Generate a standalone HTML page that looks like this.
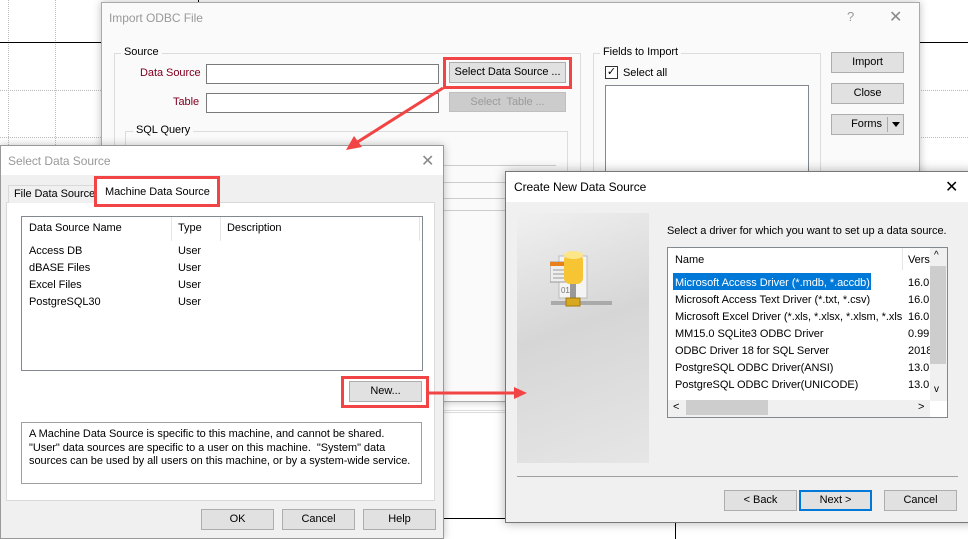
<!DOCTYPE html>
<html><head><meta charset="utf-8"><style>
*{box-sizing:border-box;margin:0;padding:0}
body{width:968px;height:539px;overflow:hidden;background:#fff;font-family:"Liberation Sans",sans-serif;font-size:11px;letter-spacing:-0.05px;color:#000;position:relative}
.a{position:absolute}
.btn{position:absolute;background:#e1e1e1;border:1px solid #adadad;text-align:center;line-height:18px;font-size:11px}
.inp{position:absolute;background:#fff;border:1px solid #7a7a7a}
.gb{position:absolute;border:1px solid #dcdcdc}
.gl{position:absolute;background:#fafafa;padding:0 3px}
.t{position:absolute;white-space:nowrap}
.red{position:absolute;border:3px solid #f24444}
</style></head><body>
<!-- background grid -->
<div class="a" style="left:8px;top:0;height:145px;border-left:1px dotted #bbb"></div>
<div class="a" style="left:55px;top:0;height:145px;border-left:1px dotted #bbb"></div>
<div class="a" style="left:0;top:42px;width:101px;border-top:1px solid #000"></div>
<div class="a" style="left:0;top:90px;width:101px;border-top:1px dotted #bbb"></div>
<div class="a" style="left:0;top:137px;width:101px;border-top:1px dotted #bbb"></div>
<div class="a" style="left:919px;top:42px;width:49px;border-top:1px solid #000"></div>
<div class="a" style="left:919px;top:90px;width:49px;border-top:1px dotted #bbb"></div>
<div class="a" style="left:919px;top:137px;width:49px;border-top:1px dotted #bbb"></div>
<div class="a" style="left:198px;top:0;height:3px;border-left:1px solid #000"></div>
<div class="a" style="left:675px;top:522px;height:17px;border-left:1px solid #000"></div>
<div class="a" style="left:443px;top:518px;width:62px;border-top:1px solid #000"></div>

<!-- Import ODBC dialog -->
<div class="a" style="left:101px;top:2px;width:819px;height:400px;background:#fafafa;border:1px solid #aaa;box-shadow:0 0 8px rgba(0,0,0,.25)"></div>
<div class="t" style="left:109px;top:11px;color:#999;font-size:12px">Import ODBC File</div>
<div class="t" style="left:847px;top:9px;color:#999;font-size:13px">?</div>
<div class="t" style="left:889px;top:7px;color:#888;font-size:16px">✕</div>
<div class="gb" style="left:114px;top:53px;width:467px;height:360px"></div>
<div class="gl" style="left:121px;top:46px">Source</div>
<div class="t" style="left:140px;top:67px;color:#800020">Data Source</div>
<div class="inp" style="left:206px;top:64px;width:233px;height:20px"></div>
<div class="btn" style="left:449px;top:62px;width:117px;height:21px">Select Data Source ...</div>
<div class="red" style="left:443px;top:57px;width:129px;height:32px"></div>
<div class="t" style="left:173px;top:96px;color:#800020">Table</div>
<div class="inp" style="left:206px;top:93px;width:233px;height:20px"></div>
<div class="btn" style="left:449px;top:92px;width:117px;height:20px;background:#ccc;border-color:#bfbfbf;color:#9a9a9a">Select&nbsp; Table ...</div>
<div class="gb" style="left:125px;top:131px;width:443px;height:280px"></div>
<div class="gl" style="left:133px;top:124px">SQL Query</div>
<div class="gb" style="left:593px;top:53px;width:228px;height:360px"></div>
<div class="gl" style="left:600px;top:46px">Fields to Import</div>
<div class="a" style="left:605px;top:66px;width:13px;height:13px;border:1px solid #333;background:#fff;font-size:11px;line-height:11px;text-align:center">✓</div>
<div class="t" style="left:623px;top:67px">Select all</div>
<div class="inp" style="left:605px;top:85px;width:204px;height:320px;border-color:#828790"></div>
<div class="btn" style="left:831px;top:52px;width:73px;height:21px">Import</div>
<div class="btn" style="left:831px;top:83px;width:73px;height:21px">Close</div>
<div class="btn" style="left:831px;top:114px;width:73px;height:21px;padding-right:21px;text-align:right">Forms</div>
<div class="a" style="left:887px;top:117px;height:15px;border-left:1px solid #aaa"></div>
<div class="a" style="left:892px;top:122px;border:4px solid transparent;border-top:5px solid #000"></div>
<div class="a" style="left:443px;top:165px;width:113px;border-top:1px solid #ccc"></div>
<div class="a" style="left:443px;top:182px;width:113px;border-top:1px solid #ccc"></div>
<div class="a" style="left:443px;top:198px;width:113px;border-top:1px solid #ccc"></div>
<div class="a" style="left:443px;top:210px;width:113px;border-top:1px solid #ccc"></div>

<!-- Select Data Source dialog -->
<div class="a" style="left:0;top:145px;width:444px;height:394px;background:#f0f0f0;border:1px solid #999;box-shadow:0 0 8px rgba(0,0,0,.25)"></div>
<div class="a" style="left:1px;top:146px;width:442px;height:29px;background:#fff"></div>
<div class="t" style="left:8px;top:154px;color:#999;font-size:12px">Select Data Source</div>
<div class="t" style="left:421px;top:151px;color:#888;font-size:16px">✕</div>
<div class="a" style="left:6px;top:202px;width:429px;height:299px;background:#fff;border:1px solid #d9d9d9"></div>
<div class="a" style="left:8px;top:185px;width:87px;height:18px;background:#f0f0f0;border:1px solid #d9d9d9;border-bottom:none"></div>
<div class="t" style="left:14px;top:188px">File Data Source</div>
<div class="a" style="left:96px;top:178px;width:123px;height:26px;background:#fff;border:1px solid #d9d9d9;border-bottom:none"></div>
<div class="t" style="left:105px;top:186px">Machine Data Source</div>
<div class="red" style="left:94px;top:176px;width:126px;height:31px"></div>
<div class="inp" style="left:21px;top:216px;width:402px;height:155px;border-color:#828790"></div>
<div class="a" style="left:171px;top:217px;height:24px;border-left:1px solid #e5e5e5"></div>
<div class="a" style="left:220px;top:217px;height:24px;border-left:1px solid #e5e5e5"></div>
<div class="a" style="left:419px;top:217px;height:24px;border-left:1px solid #e5e5e5"></div>
<div class="t" style="left:29px;top:222px">Data Source Name</div>
<div class="t" style="left:178px;top:222px">Type</div>
<div class="t" style="left:227px;top:222px">Description</div>
<div class="t" style="left:29px;top:243px;line-height:17px">Access DB<br>dBASE Files<br>Excel Files<br>PostgreSQL30</div>
<div class="t" style="left:178px;top:243px;line-height:17px">User<br>User<br>User<br>User</div>
<div class="btn" style="left:349px;top:381px;width:73px;height:21px">New...</div>
<div class="red" style="left:341px;top:376px;width:88px;height:32px"></div>
<div class="a" style="left:21px;top:422px;width:401px;height:62px;border:1px solid #a0a0a0;background:#fff"></div>
<div class="t" style="left:29px;top:428px;line-height:13.5px">A Machine Data Source is specific to this machine, and cannot be shared.<br>"User" data sources are specific to a user on this machine.&nbsp; "System" data<br>sources can be used by all users on this machine, or by a system-wide service.</div>
<div class="btn" style="left:201px;top:509px;width:73px;height:21px">OK</div>
<div class="btn" style="left:282px;top:509px;width:73px;height:21px">Cancel</div>
<div class="btn" style="left:363px;top:509px;width:73px;height:21px">Help</div>

<!-- Create New Data Source dialog -->
<div class="a" style="left:505px;top:171px;width:470px;height:352px;background:#f0f0f0;border:1px solid #777;box-shadow:0 0 10px rgba(0,0,0,.3)"></div>
<div class="a" style="left:506px;top:172px;width:462px;height:30px;background:#fff"></div>
<div class="t" style="left:514px;top:180px;font-size:12px">Create New Data Source</div>
<div class="t" style="left:945px;top:177px;font-size:16px">✕</div>
<div class="a" style="left:517px;top:213px;width:132px;height:250px;background:linear-gradient(160deg,#f0f0f0 0%,#d6d6d6 45%,#e6e6e6 100%)"></div>
<svg class="a" style="left:550px;top:248px" width="70" height="64" viewBox="0 0 70 64">
<rect x="9" y="8" width="28" height="42" fill="#f4f4f4" stroke="#bbb"/>
<text x="11" y="45" font-size="8" fill="#777" font-family="Liberation Sans">011</text>
<rect x="0" y="14" width="22" height="20" fill="#eee" stroke="#999"/>
<rect x="0" y="14" width="22" height="4" fill="#e8811c"/>
<g stroke="#999"><line x1="3" y1="22" x2="19" y2="22"/><line x1="3" y1="26" x2="19" y2="26"/><line x1="3" y1="30" x2="19" y2="30"/></g>
<rect x="20" y="36" width="6" height="16" fill="#999"/>
<rect x="1" y="53" width="61" height="4" fill="#aaa"/>
<rect x="16" y="50" width="14" height="8" fill="#d8a820" stroke="#a07a10"/>
<rect x="14" y="6" width="19" height="30" rx="6" fill="#f7c533"/>
<ellipse cx="23.5" cy="7" rx="9.5" ry="4" fill="#fde58a"/>
</svg>
<div class="t" style="left:667px;top:225px">Select a driver for which you want to set up a data source.</div>
<div class="inp" style="left:667px;top:247px;width:281px;height:171px;border-color:#828790;overflow:hidden"></div>
<div class="a" style="left:902px;top:248px;height:22px;border-left:1px solid #e5e5e5"></div>
<div class="t" style="left:675px;top:254px">Name</div>
<div class="t" style="left:908px;top:254px;width:22px;overflow:hidden">Version</div>
<div class="a" style="left:930px;top:248px;width:17px;height:153px;background:#f0f0f0"></div>
<div class="a" style="left:930px;top:266px;width:16px;height:98px;background:#cdcdcd"></div>
<div class="t" style="left:934px;top:250px;font-size:10px">^</div>
<div class="t" style="left:934px;top:384px;font-size:10px">v</div>
<div class="a" style="left:673px;top:273px;width:198px;height:17px;background:#0078d7"></div>
<div class="t" style="left:675px;top:275px;line-height:17px;width:227px;overflow:hidden"><span style="color:#fff">Microsoft Access Driver (*.mdb, *.accdb)</span><br>Microsoft Access Text Driver (*.txt, *.csv)<br>Microsoft Excel Driver (*.xls, *.xlsx, *.xlsm, *.xlsb)<br>MM15.0 SQLite3 ODBC Driver<br>ODBC Driver 18 for SQL Server<br>PostgreSQL ODBC Driver(ANSI)<br>PostgreSQL ODBC Driver(UNICODE)</div>
<div class="t" style="left:908px;top:275px;line-height:17px;width:22px;overflow:hidden">16.0<br>16.0<br>16.0<br>0.99<br>2018<br>13.0<br>13.0</div>
<div class="a" style="left:668px;top:400px;width:262px;height:17px;background:#f0f0f0"></div>
<div class="a" style="left:686px;top:400px;width:82px;height:15px;background:#cdcdcd"></div>
<div class="t" style="left:673px;top:401px;font-size:11px">&lt;</div>
<div class="t" style="left:918px;top:401px;font-size:11px">&gt;</div>
<div class="a" style="left:517px;top:476px;width:441px;border-top:1px solid #a0a0a0"></div>
<div class="btn" style="left:724px;top:490px;width:73px;height:21px">&lt; Back</div>
<div class="btn" style="left:799px;top:490px;width:73px;height:21px;border:2px solid #0078d7;line-height:17px">Next &gt;</div>
<div class="btn" style="left:884px;top:490px;width:73px;height:21px">Cancel</div>

<!-- arrows -->
<svg class="a" style="left:0;top:0" width="968" height="539">
<line x1="443" y1="88" x2="356" y2="143" stroke="#f24444" stroke-width="3"/>
<polygon points="346,150 354,136 362,147" fill="#f24444"/>
<line x1="428" y1="393" x2="515" y2="393" stroke="#f24444" stroke-width="3"/>
<polygon points="527,393 514,387 514,399" fill="#f24444"/>
</svg>
</body></html>
